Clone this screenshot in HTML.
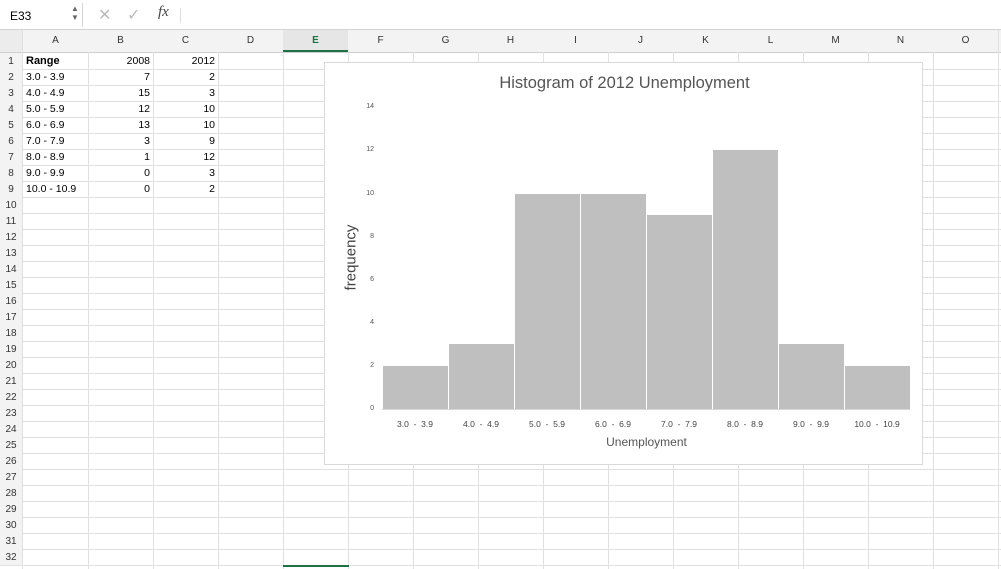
<!DOCTYPE html><html><head><style>
body{margin:0;width:1001px;height:569px;overflow:hidden;background:#fff;font-family:"Liberation Sans",sans-serif;position:relative}
.a{position:absolute}
.fb{left:0;top:0;width:1001px;height:29px;background:#fff;border-bottom:1px solid #d4d4d4}
.hdr{top:30px;height:22px;background:#f3f3f3;border-bottom:1px solid #cfcfcf;font-size:10px;color:#333;text-align:center;line-height:22px}
.vl{top:30px;width:1px;height:539px;background:#e0e0e0}
.hl{left:0;width:1001px;height:1px;background:#e0e0e0}
.rn{left:0;width:22px;background:#f3f3f3;font-size:10px;color:#333;text-align:center;height:16px;line-height:17px}
.c{font-size:10.5px;height:16px;line-height:17px;color:#000}
.yl{font-size:7px;color:#555;text-align:right;width:20px}
.bar{background:#bfbfbf;border-left:1px solid #fff;box-sizing:border-box}
.xl{font-size:8.5px;color:#444;width:66px;text-align:center}
</style></head><body>
<div class="a fb"></div>
<div class="a" style="left:0;top:3px;width:82px;height:24px;border-right:1px solid #d4d4d4"></div>
<div class="a" style="left:10px;top:9px;font-size:12px">E33</div>
<div class="a" style="left:71px;top:4px;font-size:8px;color:#666;line-height:9px">▲<br>▼</div>
<div class="a" style="left:98px;top:5px;font-size:16px;color:#bbb">✕</div>
<div class="a" style="left:127px;top:5px;font-size:16px;color:#bbb">✓</div>
<div class="a" style="left:158px;top:4px;font-size:15px;font-style:italic;font-family:'Liberation Serif',serif;color:#444">fx</div>
<div class="a" style="left:180px;top:8px;width:1px;height:15px;background:#ddd"></div>
<div class="a hdr" style="left:0;width:1001px"></div>
<div class="a" style="left:0;top:30px;width:22px;height:22px;background:#ececec"></div>
<div id="g"></div>
<div class="a" style="left:283px;top:30px;width:65px;height:22px;background:#e6e6e6;border-bottom:2px solid #1e7145;box-sizing:border-box;text-align:center;line-height:22px;font-size:10px;font-weight:bold;color:#1e7145">E</div>
<div class="a" style="left:283px;top:565px;width:66px;height:2px;background:#1e7145"></div>
<div class="a c" style="left:26px;top:53px;font-weight:bold;font-size:11px">Range</div>
<div id="d"></div>
<div class="a" style="left:324px;top:62px;width:599px;height:403px;background:#fff;border:1px solid #d9d9d9;box-sizing:border-box">
<div class="a" style="left:0;top:11px;width:599px;text-align:center;font-size:16.5px;color:#555">Histogram of 2012 Unemployment</div>
<div class="a" style="left:-14px;top:186px;transform:rotate(-90deg);font-size:15px;color:#444;width:80px;text-align:center">frequency</div>
<div id="ch"></div>
<div class="a" style="left:57px;top:346px;width:528px;height:1px;background:#d9d9d9"></div>
<div class="a" style="left:0;top:372px;width:643px;text-align:center;font-size:12px;color:#555">Unemployment</div>
</div>
<script>
var g='',cols='ABCDEFGHIJKLMNO';
for(var i=0;i<15;i++){var x=23+i*65;if(cols[i]!='E')g+='<div class="a hdr" style="left:'+x+'px;width:65px;border:none">'+cols[i]+'</div>';g+='<div class="a vl" style="left:'+(x+65)+'px"></div>';}
g+='<div class="a vl" style="left:22px"></div>';
for(var r=0;r<32;r++){var y=53+r*16;g+='<div class="a rn" style="top:'+y+'px">'+(r+1)+'</div><div class="a hl" style="top:'+(y+16)+'px"></div>';}
document.getElementById('g').innerHTML=g;
var R=['3.0 - 3.9','4.0 - 4.9','5.0 - 5.9','6.0 - 6.9','7.0 - 7.9','8.0 - 8.9','9.0 - 9.9','10.0 - 10.9'],B=[7,15,12,13,3,1,0,0],C=[2,3,10,10,9,12,3,2],d='';
for(var i=0;i<8;i++){var y=69+i*16;d+='<div class="a c" style="left:26px;top:'+y+'px">'+R[i]+'</div><div class="a c" style="left:88px;width:62px;text-align:right;top:'+y+'px">'+B[i]+'</div><div class="a c" style="left:153px;width:62px;text-align:right;top:'+y+'px">'+C[i]+'</div>';}
d+='<div class="a c" style="left:88px;width:62px;text-align:right;top:53px">2008</div><div class="a c" style="left:153px;width:62px;text-align:right;top:53px">2012</div>';
document.getElementById('d').innerHTML=d;
var h='';for(var k=0;k<=7;k++){h+='<div class="a yl" style="left:29px;top:'+(342-k*43.1)+'px">'+(k*2)+'</div>';}
for(var i=0;i<8;i++){var ht=C[i]*21.55;h+='<div class="a bar" style="left:'+(57+i*66)+'px;top:'+(346-ht)+'px;width:66px;height:'+ht+'px"></div><div class="a xl" style="left:'+(57+i*66)+'px;top:356px">'+R[i].replace(' - ','&nbsp; - &nbsp;')+'</div>';}
document.getElementById('ch').innerHTML=h;
</script>
</body></html>
